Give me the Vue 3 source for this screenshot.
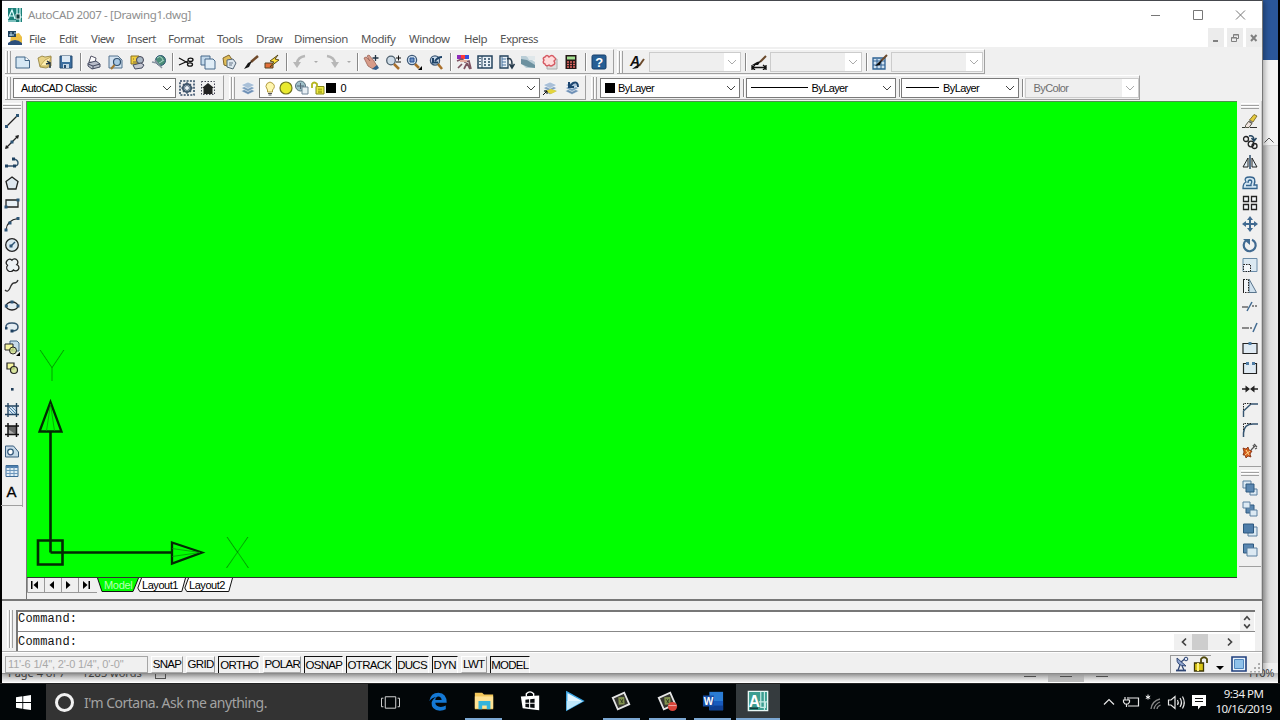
<template>
  <div class="desktop">
    <section class="word-window">
      <div class="word-title"></div>
      <div class="word-ribbon"><svg viewBox="0 0 10 6"><path d="M0.5 5.5L5 1l4.500 4.500" /></svg></div>
      <div class="word-page"></div>
      <footer class="word-status">
        <span class="word-pages">Page 4 of 7</span>
        <span class="word-count">1283 words</span>
        <span class="word-proof"></span>
        <span class="word-views"><i></i><i class="current"></i><i></i></span>
        <span class="word-slider"></span>
        <span class="word-zoom">110%</span>
      </footer>
    </section>

    <section class="cad-window">
      <header class="title-bar">
        <svg class="icon" viewBox="0 0 16 16" v-html="icons.cad"></svg>
        <span class="title">AutoCAD 2007 - [Drawing1.dwg]</span>
        <svg class="caption" viewBox="0 0 100 12"><path d="M2 6.500h9M44.500 1.500h9v9h-9zM87 1.500l9 9m0-9l-9 9" /></svg>
      </header>

      <nav class="menu-bar">
        <svg class="icon" viewBox="0 0 16 16" v-html="icons.doc"></svg>
        <ul class="menu">
          <li v-for="item in menu" :key="item">{{ item }}</li>
        </ul>
        <div class="mdi">
          <span><svg viewBox="0 0 10 10"><path d="M2 8h5" stroke-width="2" /></svg></span>
          <span><svg viewBox="0 0 10 10"><path d="M3.500 4V1.500h5v4H6.500M1.500 4.500h5v4h-5zM1.500 5h5M3.500 2h5" /></svg></span>
          <span><svg viewBox="0 0 10 10"><path d="M2 2l5.500 6m0-6L2 8" stroke-width="2" /></svg></span>
        </div>
      </nav>

      <div class="tool-row">
        <div class="toolbar standard">
          <i class="grip"></i>
          <template v-for="(t, i) in standard" :key="i">
            <i v-if="t === '|'" class="sep"></i>
            <i v-else-if="t === 'v'" class="drop"></i>
            <span v-else class="cell"><svg class="icon" viewBox="0 0 16 16" v-html="icons[t]"></svg></span>
          </template>
        </div>
        <div class="toolbar styles">
          <i class="grip"></i>
          <template v-for="(t, i) in styleTools" :key="t">
            <i v-if="i" class="sep"></i>
            <span class="cell"><svg class="icon" viewBox="0 0 16 16" v-html="icons[t]"></svg></span>
            <div class="combo disabled"><svg class="chev" viewBox="0 0 10 6"><path d="M1 1l4 4 4-4" /></svg></div>
          </template>
        </div>
      </div>

      <div class="tool-row second">
        <div class="toolbar workspaces">
          <i class="grip"></i>
          <div class="combo">
            <span>AutoCAD Classic</span>
            <svg class="chev" viewBox="0 0 10 6"><path d="M1 1l4 4 4-4" /></svg>
          </div>
          <span class="cell"><svg class="icon" viewBox="0 0 16 16" v-html="icons.gear"></svg></span>
          <span class="cell"><svg class="icon" viewBox="0 0 16 16" v-html="icons.home"></svg></span>
        </div>
        <div class="toolbar layers">
          <i class="grip"></i>
          <span class="cell"><svg class="icon" viewBox="0 0 16 16" v-html="icons.layers"></svg></span>
          <div class="combo">
            <svg v-for="t in ['bulb', 'sun', 'vpfreeze', 'unlock']" :key="t" class="icon" viewBox="0 0 16 16" v-html="icons[t]"></svg>
            <b class="swatch"></b>
            <span>0</span>
            <svg class="chev" viewBox="0 0 10 6"><path d="M1 1l4 4 4-4" /></svg>
          </div>
          <span class="cell"><svg class="icon" viewBox="0 0 16 16" v-html="icons.layerCurrent"></svg></span>
          <span class="cell"><svg class="icon" viewBox="0 0 16 16" v-html="icons.layerPrev"></svg></span>
        </div>
        <div class="toolbar props">
          <i class="grip"></i>
          <div class="combo color">
            <b class="swatch"></b><span>ByLayer</span>
            <svg class="chev" viewBox="0 0 10 6"><path d="M1 1l4 4 4-4" /></svg>
          </div>
          <i class="sep"></i>
          <div class="combo ltype">
            <i class="sample"></i><span>ByLayer</span>
            <svg class="chev" viewBox="0 0 10 6"><path d="M1 1l4 4 4-4" /></svg>
          </div>
          <i class="sep"></i>
          <div class="combo lweight">
            <i class="sample"></i><span>ByLayer</span>
            <svg class="chev" viewBox="0 0 10 6"><path d="M1 1l4 4 4-4" /></svg>
          </div>
          <i class="sep"></i>
          <div class="combo plot disabled">
            <span>ByColor</span>
            <svg class="chev" viewBox="0 0 10 6"><path d="M1 1l4 4 4-4" /></svg>
          </div>
        </div>
      </div>

      <div class="workspace">
        <aside class="side left">
          <i class="hgrip"></i>
          <svg v-for="t in drawTools" :key="t" class="icon" viewBox="0 0 16 16" v-html="icons[t]"></svg>
          <i class="side-end"></i>
        </aside>

        <div class="drawing">
          <div class="canvas">
            <svg class="ucs" viewBox="27 337 230 240">
              <g fill="none" stroke="#032a03" stroke-width="2.600">
                <path d="M38 540.500h24.500v24H38zM50.500 552.500V432M50.500 552.500H172" />
                <path d="M50.500 402L39.500 431.500h22zM202 552.500L172 542.500v21z" stroke-width="2.300" />
              </g>
              <path d="M50.500 404l-4 27M50.500 404l4 27M200 552.500l-28-4M200 552.500l-28 4" stroke="#0a8a0a" stroke-width=".7" />
              <text x="39" y="381" textLength="26" lengthAdjust="spacingAndGlyphs">Y</text>
              <text x="225" y="568" textLength="25" lengthAdjust="spacingAndGlyphs">X</text>
            </svg>
          </div>
          <div class="tabs">
            <svg class="tab-nav" viewBox="0 0 70 16">
              <path d="M17.500 0v14M34.500 0v14M51.500 0v14M.5 0v14.500h70" stroke="#999" fill="none" />
              <path d="M4 3h1.500v8H4zM11 3v8L6.500 7zM27 3v8L22.500 7zM39 3v8l4.500-4zM56 3v8l4.500-4zM61.500 3H63v8h-1.500z" />
            </svg>
            <span class="tab model"><svg viewBox="0 0 44 16"><path d="M.5 0L5 13.500h31L41.500 0" fill="#0f0" stroke="#111" /></svg><b>Model</b></span>
            <span class="tab"><svg viewBox="0 0 50 16"><path d="M4.500 0L.8 10l2 3.500h42L48.500 0" fill="#fff" stroke="#111" /></svg><b>Layout1</b></span>
            <span class="tab"><svg viewBox="0 0 50 16"><path d="M4.500 0L.8 10l2 3.500h42L48.500 0" fill="#fff" stroke="#111" /></svg><b>Layout2</b></span>
          </div>
        </div>

        <aside class="side right">
          <i class="hgrip"></i>
          <svg v-for="t in modifyTools" :key="t" class="icon" viewBox="0 0 16 16" v-html="icons[t]"></svg>
          <i class="side-end"></i>
          <i class="hgrip"></i>
          <svg v-for="t in orderTools" :key="t" class="icon" viewBox="0 0 16 16" v-html="icons[t]"></svg>
          <i class="side-end"></i>
        </aside>
      </div>

      <div class="command">
        <i class="grip"></i>
        <div class="command-body">
          <div class="history">
            <span>Command:</span>
            <svg class="vscroll" viewBox="0 0 14 20"><path d="M4 8.500L7 5l3 3.500M4 13l3 3.500L10 13" /></svg>
          </div>
          <div class="prompt">
            <span>Command:</span>
            <svg class="hscroll" viewBox="0 0 66 16">
              <rect width="66" height="16" fill="#f0f0f0" /><rect x="18" width="16" height="16" fill="#cdcdcd" />
              <path d="M12 4.500L8.500 8l3.500 3.500M54 4.500L57.500 8 54 11.500" />
            </svg>
          </div>
        </div>
      </div>

      <footer class="status-bar">
        <span class="coords">11'-6 1/4", 2'-0 1/4", 0'-0"</span>
        <button v-for="m in modes" :key="m.name" :class="{ on: m.on }" :style="{ width: m.width + 'px' }">{{ m.name }}</button>
        <span class="tray">
          <svg class="icon" viewBox="0 0 16 16" v-html="icons.dish"></svg>
          <svg class="icon" viewBox="0 0 16 16" v-html="icons.padlock"></svg>
        </span>
        <i class="tray-arrow"></i>
        <svg class="icon clean" viewBox="0 0 16 16" v-html="icons.clean"></svg>
        <i class="size-grip"></i>
      </footer>
    </section>

    <footer class="taskbar">
      <span class="start">
        <svg viewBox="0 0 16 16"><path fill="#fff" d="M0 2.300l6.800-1v6.200H0zM7.700 1.200L16 0v7.500H7.700zM0 8.400h6.800v6.200L0 13.700zM7.700 8.400H16V16l-8.300-1.200z" /></svg>
      </span>
      <span class="cortana"><i></i>I'm Cortana. Ask me anything.</span>
      <span class="task-view">
        <svg viewBox="0 0 20 14"><path d="M4.500 1.500h11v12h-11zM2.500 3h-2v9h2M17.500 3h2v9h-2" fill="none" stroke="#ddd" /></svg>
      </span>
      <span v-for="a in apps" :key="a.icon" class="app" :class="{ open: a.open, active: a.active }">
        <svg viewBox="0 0 24 24" v-html="icons[a.icon]"></svg>
      </span>
      <svg class="sys" viewBox="0 0 110 20">
        <g fill="none" stroke="#e8e8e8" stroke-width="1.200">
          <path d="M7 12.500l5-5 5 5" />
          <path d="M32 6h9.500v8H31M28 5v2.500M31 5v2.500M26.500 8h6v2l-1.500 2h-3l-1.500-2zM29.500 12v3" />
          <path d="M71.500 8v5H74l4 3.500v-12L74 8zM80.500 8q1.500 2.500 0 5M83 6q3 4.500 0 9M85.500 4.500q3.500 6 0 12" />
        </g>
        <path d="M54 17q1-8 9-10M57 17q1-5 6-7M60 17q0-2.500 3.500-4" fill="none" stroke="#888" stroke-width="1.300" />
        <path d="M51 2.500v5M48.800 4l4.400 2.500M53.200 4l-4.400 2.500" stroke="#fff" />
        <path d="M95 3h14v11h-5l-3 3.500V14h-6z" fill="#fff" /><path d="M98 6.500h8M98 9.500h8" stroke="#111" />
      </svg>
      <time class="clock"><span>9:34 PM</span><span>10/16/2019</span></time>
    </footer>
  </div>
</template>

<script setup>
const menu = ['File', 'Edit', 'View', 'Insert', 'Format', 'Tools', 'Draw', 'Dimension', 'Modify', 'Window', 'Help', 'Express'];

const standard = [
  'new', 'open', 'save', '|', 'print', 'preview', 'publish', 'web', '|',
  'cut', 'copy', 'paste', 'match', 'block', '|', 'undo', 'v', 'redo', 'v', '|',
  'pan', 'zoom', 'zoomWin', 'zoomPrev', '|', 'properties', 'design', 'palettes', 'sheets', 'markup', 'calc', '|', 'help',
];
const styleTools = ['textStyle', 'dimStyle', 'tableStyle'];

const drawTools = [
  'line', 'xline', 'pline', 'polygon', 'rect', 'arc', 'circle', 'cloud', 'spline', 'ellipse',
  'ellipseArc', 'insert', 'makeBlock', 'point', 'hatch', 'gradient', 'region', 'table', 'mtext',
];
const modifyTools = [
  'erase', 'copyObj', 'mirror', 'offset', 'array', 'move', 'rotate', 'scale', 'stretch',
  'trim', 'extend', 'breakAt', 'break', 'join', 'chamfer', 'fillet', 'explode',
];
const orderTools = ['front', 'back', 'above', 'under'];

const modes = [
  { name: 'SNAP', width: 32 },
  { name: 'GRID', width: 29 },
  { name: 'ORTHO', width: 42, on: true },
  { name: 'POLAR', width: 38 },
  { name: 'OSNAP', width: 39, on: true },
  { name: 'OTRACK', width: 46, on: true },
  { name: 'DUCS', width: 33, on: true },
  { name: 'DYN', width: 26, on: true },
  { name: 'LWT', width: 26 },
  { name: 'MODEL', width: 40, on: true },
];

const apps = [
  { icon: 'edge' },
  { icon: 'explorer', open: true },
  { icon: 'store' },
  { icon: 'player' },
  { icon: 'camtasia', open: true },
  { icon: 'recorder', open: true },
  { icon: 'word', open: true },
  { icon: 'acad', open: true, active: true },
];

const layerStack = '<path d="M1 11l7-3 7 3-7 3.500z" fill="#6d8fb5" stroke="#fff" stroke-width=".5"/><path d="M1 8l7-3 7 3-7 3.500z" fill="#7d9dc0" stroke="#fff" stroke-width=".6"/><path d="M1 5l7-3 7 3-7 3.500z" fill="#a9c0d8" stroke="#fff" stroke-width=".6"/>';
const camera = '<path d="M3 8.500L15.500 3 21 15.500 8.500 21z" fill="#35352f" stroke="#e4e4e4" stroke-width="2"/><path d="M9 8l6.500-.5.5 8-6.500.5z" fill="#81924e"/><path d="M11 10l3 4m0-4l-2 4" stroke="#2c331b"/>';

// 16x16 toolbar glyphs, 24x24 for the taskbar
const icons = {
  cad: '<path d="M1 1h14v14H1z" fill="#1b7f78"/><path d="M1 12L5 3l3 9M3 9h4M10 1v9M13 1v14M9 10h6M1 14h8" fill="none" stroke="#dff" stroke-width="1.200"/><path d="M9 7h4v5H9z" fill="#0b3b3a" stroke="#fff" stroke-width=".8"/>',
  doc: '<path d="M4 5l8-2 3 4v7H3z" fill="#ecc045"/><path d="M1 13q7-6 14 0v2H1z" fill="#2d4f7b"/><path d="M1 1h8v6H1z" fill="#20435e"/><path d="M2 5h5M4 2v4M7 3h2" stroke="#bde" />',
  new: '<path d="M1 3h9l4.500 3.500V14H1z" fill="#d5e7f4" stroke="#3f6486"/><path d="M10 3v3.500h4.500" fill="#fff" stroke="#3f6486"/>',
  open: '<path d="M1 4l4-2 3 1 6-1v10l-5 2-6-1z" fill="#e8d386" stroke="#8c7a36" stroke-width=".8"/><path d="M3 12L8 6l6-3-3 9z" fill="#fff0b0" stroke="#a98f3d" stroke-width=".7"/><path d="M13 14V9l-4 1m4-1l-3-2" fill="none" stroke="#234" stroke-width="1.500"/>',
  save: '<path d="M2 2h12v12H2z" fill="#3c6e9f" stroke="#274a6f"/><path d="M4 2h8v6H4z" fill="#dce9f4"/><path d="M5 10h6v4H5z" fill="#c4d6e7"/><path d="M6 11h2v3H6z" fill="#274a6f"/>',
  print: '<path d="M3 8l2-6 5 2-1 5z" fill="#fff" stroke="#556"/><path d="M2 9l8-2 4 3v3l-8 2-4-3z" fill="#b9bdc9" stroke="#444b60"/><path d="M2 10l5 2 7-2M7 12v3" fill="none" stroke="#444b60"/>',
  preview: '<path d="M1 2h9l4 4v8H1z" fill="#d2e2f0" stroke="#55738f"/><circle cx="9" cy="8" r="3.500" fill="#a7c7e2" stroke="#30506e" stroke-width="1.200"/><path d="M6.500 11L3 15" stroke="#a37633" stroke-width="2"/>',
  publish: '<path d="M2 2h8v8H2z" fill="#f2cf3d" stroke="#8b731e"/><path d="M4 5h1m2 0h1M4 8h4" stroke="#764"/><circle cx="11" cy="6" r="3.500" fill="#a9b8c4" stroke="#445"/><path d="M4 11l8-2 3 2-2 3-7 1z" fill="#c5c7d1" stroke="#444b60"/>',
  web: '<circle cx="9.500" cy="6.500" r="5" fill="#4b8d78" stroke="#2b5572"/><path d="M6 4q3-3 5 0t-3 5M10 8l3-2" stroke="#a6d4c4" fill="none"/><path d="M1 8l5 1 5 5M4 6l4 5" stroke="#8793a0" stroke-width="1.500" fill="none"/>',
  cut: '<path d="M1 4l9 5M1 11l9-4" stroke="#111" stroke-width="1.300"/><ellipse cx="12.500" cy="5.800" rx="2.500" ry="1.700" fill="none" stroke="#111" stroke-width="1.300"/><ellipse cx="12" cy="10.500" rx="2.500" ry="1.700" fill="none" stroke="#111" stroke-width="1.300"/>',
  copy: '<path d="M1 2h9v9H1z" fill="#c3d9eb" stroke="#46698a"/><path d="M5 5h8l2 2v8H5z" fill="#e0edf7" stroke="#46698a"/>',
  paste: '<path d="M2 4l6-3 4 6-3 6-6-2z" fill="#e0bd59" stroke="#80662c"/><path d="M6 6l6-1 3 4-3 6-6-2z" fill="#dce6ee" stroke="#567"/><path d="M8 9h4m-4 2h3" stroke="#678"/>',
  match: '<path d="M15 2L8 8" stroke="#704a2b" stroke-width="2.500"/><path d="M9 7L6 13l-5 2 4-6z" fill="#161616"/>',
  block: '<path d="M1 9h8v5H1z" fill="#e46f39" stroke="#542"/><path d="M14 1L6 7l4 1-4 5 9-7-4-1z" fill="#ffe13a" stroke="#4b3b11" stroke-width=".9"/>',
  undo: '<path d="M13 2Q6 3 5 9" fill="none" stroke="#b7b7b7" stroke-width="2.500"/><path d="M1 8h8l-4 6z" fill="#b7b7b7"/>',
  redo: '<path d="M2 2q7 1 8 7" fill="none" stroke="#b7b7b7" stroke-width="2.500"/><path d="M6 8h8l-4 6z" fill="#b7b7b7"/>',
  pan: '<path d="M1 4l2-1 4 4-3-5 2-1 5 6 3 5-4 3-5-3z" fill="#d79b89" stroke="#9b6356" stroke-width=".8"/><path d="M9 15l5-4 2 3-3 2z" fill="#355d8c"/><path d="M12.500 1v6M9.500 4h6" stroke="#234" stroke-width="1.300"/>',
  zoom: '<circle cx="6" cy="6.500" r="4.300" fill="#cddbe6" stroke="#4f616f" stroke-width="1.300"/><path d="M9 10l5 5" stroke="#a96e2a" stroke-width="2.500"/><path d="M11 4h5M13.500 1.500v5M11 8h5" stroke="#111"/>',
  zoomWin: '<circle cx="6" cy="6" r="4.600" fill="#d6e6f4" stroke="#3d5877" stroke-width="1.300"/><path d="M4 4h4v4H4z" fill="#6b91c1" stroke="#234e90"/><path d="M9 10l4 4" stroke="#a96e2a" stroke-width="2.500"/><path d="M16 12v4h-4z" fill="#000"/>',
  zoomPrev: '<circle cx="7" cy="6.500" r="4.600" fill="#cbdced" stroke="#3d5877" stroke-width="1.300"/><path d="M10 10l4 5" stroke="#a96e2a" stroke-width="2.500"/><path d="M14 3Q10 3 7 7M5 4v4.500h5" fill="none" stroke="#1e4368" stroke-width="2"/>',
  properties: '<path d="M1 1h4v4H1z" fill="#8e2bba"/><path d="M5 1h4v4H5z" fill="#ff3a38"/><path d="M9 1h4v4H9z" fill="#3250df"/><path d="M1 7l5-2 3 3 4-1 2 8M2 14l4-4M8 15l3-6 3 6" stroke="#7e5362" fill="none" stroke-width="1.700"/><path d="M4 6h7v2H4z" fill="#e3b2a0"/>',
  design: '<path d="M1 2h14v12H1z" fill="#eaf1f7" stroke="#25435d" stroke-width="1.500"/><path d="M5 2v12" stroke="#25435d"/><path d="M7 5h2m2 0h2M7 8h2m2 0h2M7 11h2m2 0h2M3 4v1m0 2v1m0 2v1" stroke="#25435d" stroke-width="1.500"/>',
  palettes: '<path d="M1 2h8v12H1z" fill="#eaf1f7" stroke="#25435d" stroke-width="1.300"/><path d="M3 5h4M3 8h4M3 11h4M3 3v10" stroke="#4874a0"/><path d="M8 5q5-2 5 5v3M10.500 10l2.500 4 2.500-4" fill="none" stroke="#273b4c" stroke-width="1.500"/>',
  sheets: '<path d="M1 2h5l9 6v6H6L1 9z" fill="#b9cdd6"/><path d="M1 5l6 1 8 5v3l-7-1-7-3z" fill="#6c909f"/><path d="M7 2h8v4H9z" fill="#dfe7ea"/>',
  markup: '<path d="M5 5h10v10H5z" fill="#ddd" stroke="#aaa"/><path d="M3 3q2-3 4 0 3-3 5 0 3 2 0 4 2 3-1 4-2 2-4 0-3 2-4-1-3-1-1-4-2-2 1-3z" fill="#ffdcdc" stroke="#d65a63" stroke-width="1.400"/>',
  calc: '<path d="M2.500 1h11v14h-11z" fill="#241616"/><path d="M4 2.500h8v3H4z" fill="#a3e091"/><path d="M4 8h2m1 0h2m1 0h2M4 10.500h2m1 0h2m1 0h2M4 13h2m1 0h2m1 0h2" stroke="#e46662" stroke-width="1.500"/>',
  help: '<rect x="1" y="1" width="14" height="14" rx="1.500" fill="#265e94" stroke="#153d69"/><text x="4.300" y="13" font-family="Liberation Sans" font-size="13" font-weight="bold" fill="#fff">?</text>',
  textStyle: '<text x="1" y="12" font-family="Liberation Sans" font-size="14" font-weight="bold" font-style="italic" fill="#111">A</text><path d="M15 5l-5 7" stroke="#6b4a2c" stroke-width="2"/><path d="M11 10l-2 4-6 1 4-3z" fill="#111"/>',
  dimStyle: '<path d="M1 11v5M15 11v5M1 13.500h14M4 11l-3 2.500 3 2.500M12 11l3 2.500-3 2.500" fill="none" stroke="#111" stroke-width="1.300"/><path d="M15 2L9 8" stroke="#6b4a2c" stroke-width="2"/><path d="M10 7l-3 4H1l5-3z" fill="#111"/>',
  tableStyle: '<path d="M1 4h12v11H1z" fill="#cfe0ef" stroke="#2e6193" stroke-width="1.300"/><path d="M1 7h12M1 11h12M5 5v10M9 5v10" stroke="#2e6193"/><path d="M15 1L9 7" stroke="#6b4a2c" stroke-width="2"/><path d="M10 6l-2 5-5 1 4-4z" fill="#111"/>',
  gear: '<path d="M1 1h14v14H1z" fill="none" stroke="#334b66" stroke-width="1.600" stroke-dasharray="2 1.300"/><circle cx="8" cy="8" r="4.200" fill="#c4cfda" stroke="#40566c" stroke-width="1.800"/><path d="M8 2v12M2 8h12M4 4l8 8m0-8l-8 8" stroke="#40566c" stroke-width="1.200"/><circle cx="8" cy="8" r="2" fill="#eef3f8"/>',
  home: '<path d="M1.500 1.500h13v13h-13z" fill="none" stroke="#445" stroke-dasharray="1.500 1.500"/><path d="M8 3l6 5h-1.500v6h-9V8H2z" fill="#222"/>',
  layers: layerStack,
  layerCurrent: layerStack + '<path d="M2 7l6-2 6 2-6 3z" fill="#e4d43c" transform="translate(1 4)"/><path d="M1 15l4-4M2 11h3v3" fill="none" stroke="#111"/>',
  layerPrev: layerStack + '<path d="M14 7Q14 1 9 3L6 6M5 2v5h5" fill="none" stroke="#1c456f" stroke-width="2"/>',
  bulb: '<path d="M5.500 10Q2.500 6 5 3.500q3-3 6 0T10.500 10v2h-5z" fill="#fff6ae" stroke="#b39c42"/><path d="M6 13.500h4M6.500 15h3" stroke="#555"/>',
  sun: '<circle cx="8" cy="8" r="6" fill="#e9ea2f" stroke="#74751f" stroke-width="1.200"/>',
  vpfreeze: '<circle cx="6.500" cy="6" r="5" fill="#9fc0c9" stroke="#566f7c"/><path d="M8 7h6v7H8z" fill="#e8eff4" stroke="#72879a"/><path d="M3 6h7M6.500 3v6" stroke="#567"/>',
  unlock: '<path d="M6 6.500h8V14H6z" fill="#ece943" stroke="#8a8a1b"/><path d="M2 8V4q2-3 5 0v3M8 9.500h4M8 12h4" fill="none" stroke="#b5b51f" stroke-width="1.800"/>',

  line: '<path d="M2.500 13.500l11-11" stroke="#222" stroke-width="1.200"/><path d="M1 12h3v3H1zM12 1h3v3h-3z" fill="#2d5576"/>',
  xline: '<path d="M2 14L14 2" stroke="#222" stroke-width="1.300"/><path d="M1 15l1-4 3 3zM15 1l-4 1 3 3z" fill="#222"/><path d="M6.500 6.500h3v3h-3z" fill="#2d5576"/>',
  pline: '<path d="M2 12h8q4 0 4-3t-4-4" fill="none" stroke="#34536f" stroke-width="1.400"/><path d="M1 10.500h3v3H1zM9 10.500h3v3H9zM8 3.500h3v3H8z" fill="#1d4060"/>',
  polygon: '<path d="M8 2l6 4.500-2 7.500H4L2 6.500z" fill="#dfe8ef" stroke="#222" stroke-width="1.300"/>',
  rect: '<path d="M2 5h12v7H2z" fill="#e8f0f6" stroke="#222" stroke-width="1.300"/><path d="M12.500 3.500h3v3h-3zM.5 10.500h3v3h-3z" fill="#2d5576"/>',
  arc: '<path d="M2 14Q3 4 14 2.500" fill="none" stroke="#222" stroke-width="1.200"/><path d="M.5 12.500h3v3h-3zM4.500 5.500h3v3h-3zM12.500 1h3v3h-3z" fill="#2d5576"/>',
  circle: '<circle cx="8" cy="8" r="6.300" fill="#dce8f1" stroke="#222" stroke-width="1.300"/><path d="M7 9l4-4" stroke="#2d5576" stroke-width="1.500"/><path d="M5.500 7.500h3v3h-3z" fill="#2d5576"/>',
  cloud: '<path d="M3.500 8.300A3.200 3.200 0 1 1 8 3.200A3.300 3.300 0 1 1 12.800 7.700A3.200 3.200 0 1 1 9.500 13A3.200 3.200 0 1 1 3.500 8.300z" fill="#edf2f6" stroke="#222" stroke-width="1.300"/>',
  spline: '<path d="M1 12q3 3 5-2t4-5q3 0 4-3" fill="none" stroke="#333" stroke-width="1.300"/>',
  ellipse: '<ellipse cx="8" cy="8" rx="6" ry="4" fill="#e4edf3" stroke="#222" stroke-width="1.300"/><path d="M.8 6.500h3v3h-3zM12.500 6.500h3v3h-3zM6.500 2.500h3v3h-3z" fill="#2d5576"/>',
  ellipseArc: '<path d="M2 9q-1-5 6-5 6 0 6 4t-6 4" fill="#e4edf3" stroke="#34536f" stroke-width="1.500"/><path d="M6.500 10.500h3v3h-3zM1 8h2.500v2.500H1z" fill="#1d4060"/>',
  insert: '<path d="M6 1h7l2 2v8H6z" fill="#c7dbea" stroke="#46698a"/><path d="M1 4h8v6H1z" fill="#f7f5a0" stroke="#222"/><circle cx="9" cy="10.500" r="3.500" fill="#d5e48b" fill-opacity=".8" stroke="#222"/><path d="M16 12v4h-4z" fill="#000"/>',
  makeBlock: '<path d="M3 3h7v6H3z" fill="#f7f5a0" stroke="#222" stroke-width="1.200"/><circle cx="10" cy="10" r="3.500" fill="#d5e48b" fill-opacity=".8" stroke="#222" stroke-width="1.200"/>',
  point: '<path d="M7 7h2.600v2.600H7z" fill="#1e3c58"/>',
  hatch: '<path d="M4 4h8v8H4z" fill="#d5e5f1"/><path d="M1 4h14M1 12.500h14M4 1v14M12.500 1v14" stroke="#24445f" stroke-width="1.400"/><path d="M5 5l7 7M8 5l4 4M5 8l4 4" stroke="#5384ad"/>',
  gradient: '<path d="M4 4h8.500v8.500H4z" fill="#666"/><path d="M4 12.500V7l8 5.500z" fill="#aaa"/><path d="M1 4h14M1 12.500h14M4 1v14M12.500 1v14" stroke="#111" stroke-width="1.500"/>',
  region: '<path d="M1.500 3h8l5 6v5h-13z" fill="#c6d9e8" stroke="#365b7c"/><circle cx="6.500" cy="9" r="2.800" fill="#fff" stroke="#365b7c" stroke-width="1.300"/>',
  table: '<path d="M2 2.500h12v11H2z" fill="#e1edf6" stroke="#3d6b96"/><path d="M2 3h12v2H2z" fill="#4e7faf"/><path d="M2 7.500h12M2 10.500h12M6 4v9M10 4v9" stroke="#6f98bd"/>',
  mtext: '<text x="2.500" y="13" font-family="Liberation Sans" font-size="15" fill="#000" stroke="#000" stroke-width=".3">A</text>',

  erase: '<path d="M0 14.500h3M8 14.500h7" stroke="#333"/><path d="M12 1.500l3 1.500-4 6-3.500-2z" fill="#e5c93f" stroke="#6b5c1c" stroke-width=".8"/><path d="M7.500 7l3.500 2-1 1.500-3.500-2z" fill="#888"/><path d="M6.500 8.500l3.500 2-3 4H3.500v-2z" fill="#f0e4e0" stroke="#443" stroke-width=".9"/>',
  copyObj: '<circle cx="4" cy="5" r="2.500" fill="none" stroke="#222" stroke-width="1.300"/><circle cx="9" cy="10" r="2.800" fill="none" stroke="#222" stroke-width="1.300"/><circle cx="12.500" cy="12" r="2.500" fill="none" stroke="#222" stroke-width="1.300"/><path d="M7 2q5-1 5 4M9.500 4l2.500 3 2.500-3" fill="none" stroke="#24445f" stroke-width="1.500"/>',
  mirror: '<path d="M8 1v14" stroke="#1d4060" stroke-width="1.400"/><path d="M6 4v9H1zM10 4v9h5z" fill="#e3edf4" stroke="#222"/>',
  offset: '<path d="M1 13.500h14v-3.500h-3q3-8-4-8T4 7Q1 8 1 13.500z" fill="#d4e6f3" stroke="#34638d" stroke-width="1.300"/><path d="M4 10.500h5V9q2-3.500-1-4-2 0-2 3" fill="none" stroke="#34638d" stroke-width="1.300"/>',
  array: '<path d="M1.500 1.500h5v5h-5zM9.500 1.500h5v5h-5zM1.500 9.500h5v5h-5zM9.500 9.500h5v5h-5z" fill="#f4f7fa" stroke="#222" stroke-width="1.300"/>',
  move: '<path d="M8 2v12M2 8h12" stroke="#416a91" stroke-width="2"/><path d="M8 0l3 4H5zM8 16l3-4H5zM0 8l4-3v6zM16 8l-4-3v6z" fill="#416a91"/>',
  rotate: '<path d="M4 3.500a6 6 0 1 0 6-.8" fill="none" stroke="#416a91" stroke-width="2.200"/><path d="M1 2h7v6z" fill="#416a91"/>',
  scale: '<path d="M1 1.500h14v13H1z" fill="#dbe8f1" stroke="#6a8ca9"/><path d="M1.500 7.500h7v7h-7z" fill="#f4f7fa" stroke="#222" stroke-dasharray="1.500 1"/>',
  stretch: '<path d="M7 1l7.500 13.500H7z" fill="#cfe0ed" stroke="#59758d"/><path d="M1.500 1.500h5v13h-5z" fill="#f3f6f9" stroke="#222" stroke-dasharray="1.500 1"/><path d="M1.500 1v14" stroke="#222"/>',
  trim: '<path d="M0 9h6" stroke="#222"/><path d="M5 13l5-9" stroke="#416a91" stroke-width="1.500"/><path d="M10 8h6" stroke="#222" stroke-dasharray="2 1"/>',
  extend: '<path d="M0 9h5" stroke="#222"/><path d="M5 9h6" stroke="#222" stroke-dasharray="2 1"/><path d="M11 13l4-9" stroke="#416a91" stroke-width="1.500"/>',
  breakAt: '<path d="M1 3.500h14v10H1z" fill="#dfeaf3" stroke="#222" stroke-width="1.200"/><path d="M6.500 2h3v3h-3z" fill="#4f7da6"/>',
  break: '<path d="M5 3.500H1.500v10h13v-10H11" fill="#dfeaf3" stroke="#222" stroke-width="1.200"/><path d="M4 2h3v3H4zM10 2h3v3h-3z" fill="#4f7da6"/>',
  join: '<path d="M0 8h4M12 8h4" stroke="#222" stroke-width="1.300"/><path d="M3.500 4.500L8 8l-4.500 3.500zM12.500 4.500L8 8l4.500 3.500z" fill="#222"/>',
  chamfer: '<path d="M1.500 15V9L9 2h7" fill="none" stroke="#34536f" stroke-width="1.400"/><path d="M1.500 8V1.500H9" fill="none" stroke="#222" stroke-dasharray="1.500 1"/>',
  fillet: '<path d="M1.500 15V11Q2 2 11 2h5" fill="none" stroke="#34536f" stroke-width="1.500"/><path d="M1.500 8V1.500H9" fill="none" stroke="#222" stroke-dasharray="1.500 1"/>',
  explode: '<path d="M1 5l3 1 2-2 1 3 3 1-2 3 1 3-3-1-2 2-1-3-2 0 1-3z" fill="#d55e1c" stroke="#7d2b0d" stroke-width=".8"/><path d="M3 12l5-4M4 7l3 5" stroke="#ffd98c"/><path d="M9 7l5-5M11 2l1 2m3 1l-2 1m-1-5l3 3" stroke="#555" stroke-width="1.200"/>',
  front: '<path d="M1 1h8v7H1zM8 9h7v6H8z" fill="#dce9f3" stroke="#5a7f9f"/><path d="M4 4h8v8H4z" fill="#5b87b1" stroke="#2e587f"/>',
  back: '<path d="M4 4h8v8H4z" fill="#5b87b1" stroke="#2e587f"/><path d="M1 1h7v6H1zM8 9h7v6H8z" fill="#dce9f3" stroke="#5a7f9f"/>',
  above: '<path d="M6 5h9v9H6z" fill="#dce9f3" stroke="#5a7f9f"/><path d="M1.500 2h10v9h-10z" fill="#4f7daa" stroke="#2e587f"/>',
  under: '<path d="M1.500 2h10v9h-10z" fill="#5b87b1" stroke="#2e587f"/><path d="M5 6h10v8H5z" fill="#dce9f3" stroke="#5a7f9f"/>',

  dish: '<path d="M3 2q-1 8 9 8z" fill="#8fa5cf" stroke="#2f4674"/><path d="M7 6l5-4M8 10l2 4M6 9l-2 5" stroke="#2f4674" stroke-width="1.300"/><path d="M2 14.500h10" stroke="#2f4674" stroke-width="1.800"/><circle cx="12" cy="3" r="1.800" fill="#dfe6f5" stroke="#2f4674"/>',
  padlock: '<path d="M1.500 7h9v8h-9z" fill="#d9c414" stroke="#3c3605" stroke-width="1.300"/><path d="M4 7h2v8H4z" fill="#fff27a"/><path d="M8 7V3q3-3.500 6 0v4" fill="none" stroke="#4f480a" stroke-width="1.800"/>',
  clean: '<path d="M1 1h14v14H1z" fill="#e8f2fb" stroke="#1f3f7d" stroke-width="1.600"/><path d="M3.500 3.500h9v9h-9z" fill="#8fc1ea" stroke="#4f86bd"/>',

  edge: '<path d="M2.500 12Q4 3 12.500 3 21.500 3.500 21.500 14H9q.500 4.500 6 4.500 3 0 5.500-1.500v4Q18 22.500 14 22.500 4.500 22 5 14q.500-4 5-6.500Q5.500 8 2.500 12zM9 11h7q-.500-4-3.500-4T9 11z" fill="#1478d4"/>',
  explorer: '<path d="M2 3h8l2 2h10v16H2z" fill="#f3c75a"/><path d="M2 7h20v13H2z" fill="#ffe293"/><path d="M6 12h13v9h-4v-4h-5v4H6z" fill="#35b4dc"/>',
  store: '<path d="M2 7l20-1v16L4 20z" fill="#fff"/><path d="M8 7V4q4-4 8 0v3" fill="none" stroke="#fff" stroke-width="1.500"/><path d="M7 10.500l4-.5v4H7zM12.200 10l4.800-.5V14h-4.800zM7 15h4v4l-4-.5zM12.200 15H17v4.600l-4.800-.6z" fill="#080b0e"/>',
  player: '<path d="M3 2l18 10L3 22z" fill="#e2f5ff" stroke="#39a4e3" stroke-width="1.500"/><path d="M3 12h18L3 22z" fill="#c0e7fb"/>',
  camtasia: camera,
  recorder: camera + '<circle cx="18" cy="18" r="5" fill="#d9453a"/><path d="M13.500 17h9" stroke="#fff" stroke-opacity=".6"/>',
  word: '<path d="M8 2h15v20H8z" fill="#2b7cd3"/><path d="M8 12h15v10H8z" fill="#185abd"/><path d="M8 17h15v5H8z" fill="#103f91"/><path d="M1 6h12v12H1z" fill="#174ea6"/><text x="2" y="16" font-family="Liberation Sans" font-size="11" font-weight="bold" fill="#fff">W</text>',
  acad: '<path d="M1.500 1.500h21v21h-21z" fill="#3c9d91" stroke="#e9f7f5" stroke-width="1.500"/><text x="2" y="18" font-family="Liberation Sans" font-size="17" font-weight="bold" fill="#fff">A</text><path d="M15 2v11M19 2v20M13 13h9M15 13h5v6h-5z" fill="none" stroke="#c5ebe5" stroke-width="1.300"/><path d="M3 20h9" stroke="#123f3d" stroke-width="2"/>',
};
</script>

<style>
body {
  margin: 0;
  overflow: hidden;
  background: #000;
}
</style>

<style scoped>
.desktop, .desktop * {
  box-sizing: border-box;
}

.desktop {
  position: relative;
  width: 1280px;
  height: 720px;
  background: #000;
  overflow: hidden;
  font-family: "Noto Sans", "Open Sans", sans-serif;
}

svg {
  display: block;
  flex: none;
}

.icon {
  width: 16px;
  height: 16px;
}

/* window behind */
.word-window {
  position: absolute;
  left: 2px;
  top: 0;
  width: 1276px;
  height: 683px;
  display: flex;
  flex-direction: column;
  background: #e4e4e4;
}

.word-title {
  height: 60px;
  background: #2a5699;
}

.word-ribbon {
  height: 86px;
  display: flex;
  justify-content: flex-end;
  align-items: flex-end;
  padding: 0 4px 2px 0;
  background: #f3f3f3;
  border-bottom: 1px solid #d0d0d0;
}

.word-ribbon svg {
  width: 10px;
  height: 6px;
  fill: none;
  stroke: #555;
}

.word-page {
  flex: 1;
  background: linear-gradient(90deg, #bbb 1260px, #dedede 1268px, #e8e8e8);
}

.word-status {
  height: 20px;
  display: flex;
  align-items: center;
  border-bottom: 1px solid #fff;
  background: linear-gradient(#f0f0f0 10px, #b4b4b4 10px, #dcdcdc 16px, #f2f2f2);
  font-size: 11px;
  line-height: 14px;
  color: #444;
  padding: 1px 4px 0 6px;
}

.word-pages {
  width: 74px;
}

.word-count {
  width: 73px;
}

.word-proof {
  width: 11px;
  height: 11px;
  border: 1px solid #555;
}

.word-views {
  display: flex;
  align-self: stretch;
  margin-left: 846px;
}

.word-views i {
  width: 36px;
  border: solid transparent;
  border-width: 0 12px 5px;
  box-shadow: inset 0 -1px #555;
}

.word-views .current {
  border-color: #bcbcbc;
}

.word-slider {
  flex: 1;
}

.word-zoom {
  letter-spacing: -.3px;
}

/* main window */
.cad-window {
  position: absolute;
  left: 2px;
  top: 0;
  width: 1261px;
  height: 674px;
  display: flex;
  flex-direction: column;
  background: #f0f0f0;
  border-top: 1px solid #45474d;
  border-right: 1px solid #777;
  border-bottom: 1px solid #8b8b8b;
  box-shadow: 2px 1px 5px rgba(0, 0, 0, .3);
}

.title-bar {
  height: 27px;
  display: flex;
  align-items: center;
  padding: 0 13px 0 5px;
  background: #fff;
}

.title {
  flex: 1;
  margin-left: 5px;
  color: #8e8e8e;
  font-size: 11.500px;
  letter-spacing: -.37px;
}

.caption {
  width: 100px;
  height: 12px;
  fill: none;
  stroke: #777;
}

.menu-bar {
  height: 19px;
  display: flex;
  align-items: center;
  padding-left: 5px;
  background: #fff;
}

.menu {
  flex: 1;
  display: grid;
  grid-template-columns: 30px 32px 36px 41px 49px 39px 38px 67px 48px 55px 36px 60px;
  margin: 0;
  padding: 1px 0 0 6px;
  list-style: none;
  font-size: 11.500px;
  letter-spacing: -.5px;
  color: #555;
  white-space: nowrap;
}

.mdi {
  display: flex;
  align-self: stretch;
  gap: 3px;
}

.mdi span {
  width: 16px;
  display: flex;
  align-items: center;
  justify-content: center;
  background: #ececec;
}

.mdi svg {
  width: 10px;
  height: 10px;
  fill: none;
  stroke: #808080;
}

.tool-row {
  height: 27px;
  padding: 2px 0 0 3px;
  display: flex;
}

.tool-row.second {
  padding-top: 1px;
}

.toolbar {
  height: 25px;
  display: flex;
  align-items: center;
  border-top: 1px solid #fff;
  border-bottom: 1px solid #a0a0a0;
  border-right: 1px solid #a0a0a0;
}

.grip {
  width: 7px;
  height: 22px;
  flex: none;
  background: linear-gradient(90deg, #fff 1px, #f0f0f0 1px 2px, #a0a0a0 2px 3px, #fff 3px 4px, #f0f0f0 4px 5px, #a0a0a0 5px 6px, transparent 6px);
}

.cell {
  width: 21.500px;
  display: flex;
  justify-content: center;
}

.sep {
  width: 6.300px;
  height: 18px;
  background: linear-gradient(90deg, transparent 3px, #888 3px 4px, #fff 4px 5px, transparent 5px);
}

.drop {
  width: 11px;
  display: flex;
  justify-content: center;
}

.drop::after {
  content: "";
  border: solid transparent;
  border-width: 2px 2.500px 0;
  border-top-color: #aaa;
}

.standard {
  width: 609px;
}

.standard .grip {
  margin-right: .5px;
}

.styles {
  margin-left: 3px;
}

.styles .grip + .cell {
  width: 25px;
}

.combo {
  height: 20px;
  display: flex;
  align-items: center;
  padding: 0 3px 0 7px;
  background: #fff;
  border: 1px solid #7a7a7a;
  font: 11px "Liberation Sans", sans-serif;
  letter-spacing: -.6px;
  color: #000;
}

.combo .chev {
  width: 10px;
  height: 6px;
  margin-left: auto;
  fill: none;
  stroke: #444;
}

.combo.disabled {
  color: #6e6e6e;
  background: linear-gradient(90deg, #efefef calc(100% - 16px), #fff calc(100% - 16px));
  border-color: #ccc;
}

.combo.disabled .chev {
  stroke: #aaa;
}

.styles .combo {
  width: 92px;
  margin-right: 1px;
}

.workspaces {
  width: 219px;
}

.workspaces .grip {
  margin-right: 1px;
}

.workspaces .combo {
  width: 163px;
}

.layers {
  width: 357px;
  margin-left: 5px;
}

.layers .grip {
  margin-right: 1px;
}

.layers .combo {
  width: 281px;
  padding-left: 2px;
}

.layers .swatch {
  margin-right: 5px;
}

.swatch {
  width: 10px;
  height: 10px;
  background: #000;
}

.props {
  margin-left: 5px;
}

.props .grip {
  margin-right: 2px;
}

.props .sep {
  width: 5.500px;
}

.combo.color {
  width: 140px;
  padding-left: 4px;
}

.combo.color span {
  margin-left: 3px;
}

.combo.ltype {
  width: 150px;
  padding-left: 4px;
}

.combo.lweight {
  width: 118px;
  padding-left: 4px;
}

.combo.plot {
  width: 114px;
  padding-left: 8px;
}

.sample {
  width: 57px;
  height: 1px;
  margin-right: 4px;
  background: #000;
}

.lweight .sample {
  width: 33px;
}

/* drawing area */
.workspace {
  height: 498px;
  display: flex;
}

.side {
  width: 21px;
  display: flex;
  flex-direction: column;
  align-items: center;
}

.side .icon {
  margin-bottom: 4.620px;
}

.side.left {
  border-right: 1px solid #aaa;
  height: 406px;
}

.hgrip {
  width: 18px;
  height: 7px;
  flex: none;
  margin: 2px 0 3px;
  background: linear-gradient(#fff 1px, #f0f0f0 1px 2px, #a0a0a0 2px 3px, #fff 3px 4px, #f0f0f0 4px 5px, #a0a0a0 5px 6px, transparent 6px);
}

.side-end {
  width: 22px;
  height: 1px;
  flex: none;
  background: #a0a0a0;
}

.side.right {
  width: 25px;
  margin-left: auto;
  padding-left: 2px;
  border-right: 1px solid #ccc;
}

.side.right .side-end {
  margin-top: 3px;
}

.side.right .side-end + .hgrip {
  margin-top: 3px;
}

.drawing {
  width: 1211px;
  margin-left: 3px;
  display: flex;
  flex-direction: column;
  border-left: 1px solid #777;
}

.canvas {
  height: 476px;
  display: flex;
  align-items: flex-end;
  background: #0f0;
  border-top: 1px solid #4c8f4c;
}

.ucs {
  width: 230px;
  height: 240px;
}

.ucs text {
  font: 100 43px Lato, sans-serif;
  fill: #045d04;
}

.tabs {
  height: 16px;
  display: flex;
  border-top: 1px solid #333;
  font: 11px "Liberation Sans", sans-serif;
}

.tab-nav {
  width: 70px;
  height: 16px;
}

.tab {
  width: 47px;
  height: 16px;
  display: grid;
  letter-spacing: -.45px;
}

.tab svg, .tab b {
  grid-area: 1 / 1;
}

.tab svg {
  width: 50px;
  height: 16px;
}

.tab b {
  z-index: 1;
  padding: 0 0 0 5px;
  font-weight: normal;
  line-height: 14px;
}

.tab.model {
  width: 40px;
}

.tab.model svg {
  width: 44px;
}

.tab.model b {
  padding-left: 7px;
  letter-spacing: -.3px;
  color: #b9ffb9;
}

/* command line */
.command {
  height: 53px;
  display: flex;
  padding: 9px 7px 0 5px;
  border-top: 2px solid #777;
  border-bottom: 1px solid #aaa;
}

.command .grip {
  height: 38px;
}

.command-body {
  flex: 1;
  margin-left: 2px;
  border-left: 2px solid #777;
  border-top: 2px solid #777;
  background: #fff;
  font: 12px "Liberation Mono", monospace;
  letter-spacing: .2px;
  color: #111;
}

.history, .prompt {
  height: 20px;
  display: flex;
  justify-content: space-between;
  align-items: center;
}

.history {
  border-bottom: 1px solid #888;
}

.history span {
  padding-bottom: 6px;
}

.vscroll {
  width: 14px;
  height: 19px;
  margin-right: 1px;
  background: #f0f0f0;
}

.hscroll {
  width: 66px;
  height: 16px;
  margin-right: 15px;
}

.vscroll path, .hscroll path {
  fill: none;
  stroke: #444;
  stroke-width: 1.700;
}

/* status bar */
.status-bar {
  flex: 1;
  display: flex;
  align-items: center;
  padding: 2px 2px 0 3px;
  border-top: 1px solid #fff;
}

.coords {
  width: 143px;
  height: 17px;
  margin-right: 3px;
  padding-left: 2px;
  border: 1px solid #a5a5a5;
  font: 11px/15px "Liberation Sans", sans-serif;
  letter-spacing: -.16px;
  color: #a8a8a8;
  white-space: nowrap;
}

.status-bar button {
  height: 17px;
  margin-right: 3.100px;
  padding: 0;
  border: 1px solid #fff;
  border-right-color: #999;
  border-bottom-color: #aaa;
  background: none;
  font: 11.500px/14px "Liberation Sans", sans-serif;
  letter-spacing: -.7px;
  color: #000;
  white-space: nowrap;
}

.status-bar button.on {
  border: 1px solid #111;
  border-bottom: 0;
  border-right-color: #fff;
  line-height: 16px;
}

.tray {
  display: flex;
  gap: 3px;
  height: 18px;
  width: 41px;
  margin-left: auto;
  padding-left: 3px;
  border-left: 1px solid #999;
  border-top: 1px solid #999;
}

.tray-arrow {
  margin: 7px 7px 0 5px;
  border: solid transparent;
  border-width: 4px 4px 0;
  border-top-color: #000;
}

.size-grip {
  width: 11px;
  height: 11px;
  margin: 6px 0 0 2px;
  background: radial-gradient(#aaa 1px, transparent 1.200px) 0 0 / 4px 4px;
  clip-path: polygon(100% 0, 100% 100%, 0 100%);
}

/* taskbar */
.taskbar {
  position: absolute;
  left: 0;
  bottom: 0;
  width: 1280px;
  height: 37px;
  display: flex;
  align-items: center;
  background: #020608;
  border-top: 1px solid #222;
}

.start {
  width: 46px;
  padding-left: 16px;
}

.start svg {
  width: 15px;
  height: 15px;
}

.cortana {
  width: 322px;
  height: 36px;
  display: flex;
  align-items: center;
  padding-left: 9px;
  background: #333;
  color: #a2a2a2;
  font-size: 14px;
  letter-spacing: -.5px;
}

.cortana i {
  width: 19px;
  height: 19px;
  margin-right: 10px;
  border: 3px solid #f2f2f2;
  border-radius: 50%;
}

.task-view {
  width: 47px;
  padding-left: 13px;
}

.task-view svg {
  width: 19px;
  height: 14px;
}

.app {
  width: 45.850px;
  height: 36px;
  display: flex;
  flex-direction: column;
  align-items: center;
  padding-top: 6px;
}

.app svg {
  width: 22px;
  height: 22px;
}

.app.open::after {
  content: "";
  width: 37px;
  height: 2px;
  margin-top: auto;
  background: #7ba7d2;
}

.app.active {
  width: 44px;
  background: #353b3e;
}

.app.active::after {
  width: 44px;
}

.sys {
  width: 110px;
  height: 20px;
  margin-left: auto;
}

.clock {
  width: 73px;
  display: flex;
  flex-direction: column;
  align-items: center;
  padding-bottom: 2px;
  color: #eee;
  font-size: 11.500px;
  line-height: 15.500px;
  letter-spacing: -.5px;
}
</style>
